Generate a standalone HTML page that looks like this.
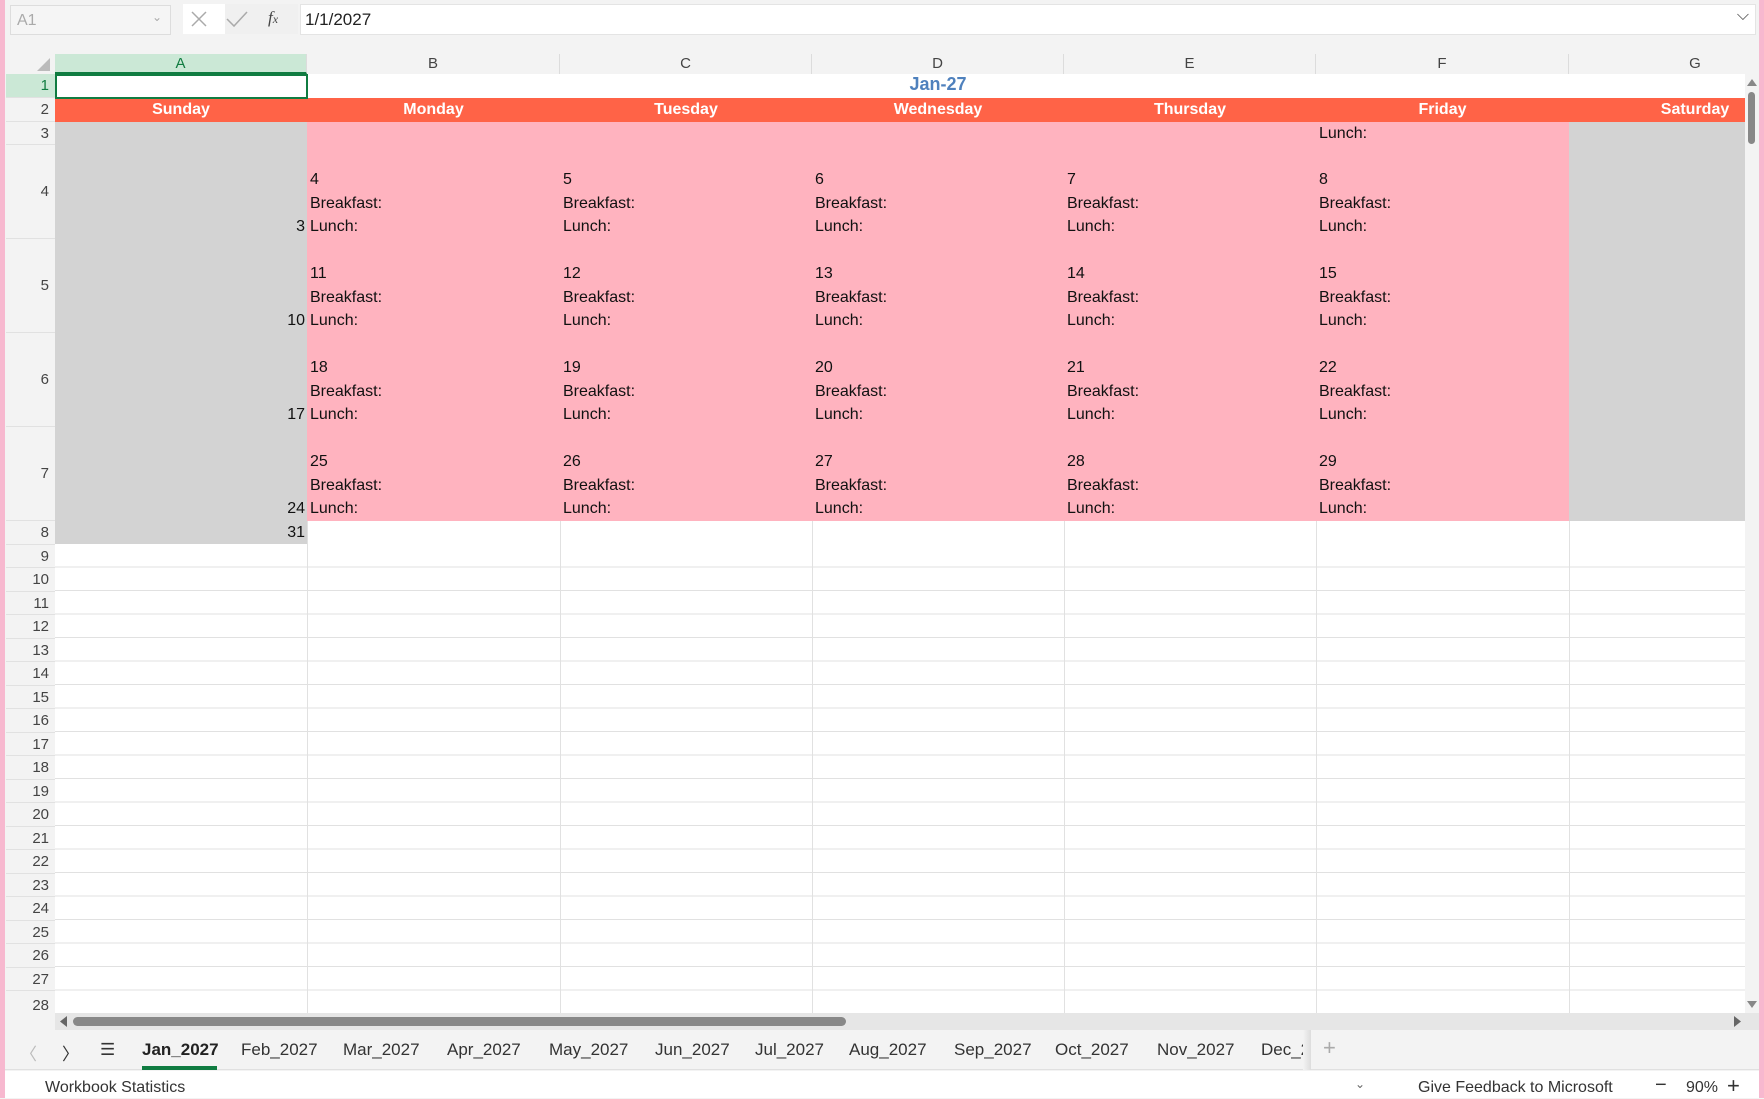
<!DOCTYPE html>
<html><head><meta charset="utf-8"><style>
*{box-sizing:border-box;margin:0;padding:0}
body{width:1764px;height:1098px;overflow:hidden;background:#f3f3f3;font-family:"Liberation Sans",sans-serif;position:relative;color:#222}
.a{position:absolute}
.vl{position:absolute;top:98px;width:1px;height:915px;background:#e1e1e1}
.rh{position:absolute;left:6px;width:49px;text-align:right;padding-right:6px;font-size:15px;color:#444;border-bottom:1px solid #e1e1e1;background:#f3f3f3}
.ch{position:absolute;top:54px;height:20px;text-align:center;font-size:15px;color:#444;line-height:20px;border-right:1px solid #dcdcdc}
.cell{position:absolute;font-size:16px;line-height:23.5px;padding-left:3px;color:#111}
.day{position:absolute;top:98px;height:24px;color:#fff;font-weight:bold;font-size:16px;line-height:24px;text-align:center}
.tab{position:absolute;top:1040px;font-size:17px;color:#333}
</style></head><body>
<div class="a" style="left:0;top:0;width:5px;height:1098px;background:#f7b8cf"></div>
<div class="a" style="right:0;top:0;width:5px;height:1098px;background:#f7b8cf"></div>
<div class="a" style="left:10px;top:5px;width:161px;height:30px;border:1px solid #ddd;background:#f5f5f5;font-size:16px;color:#aaa;padding:6px 6px">A1<span style="position:absolute;right:8px;top:4px;font-size:12px">⌄</span></div>
<div class="a" style="left:183px;top:4px;width:115px;height:30px;background:#fff"></div>
<div class="a" style="left:225px;top:4px;width:73px;height:30px;background:#f0f0f0"></div>
<svg class="a" style="left:190px;top:10px" width="18" height="18"><path d="M2 2L16 16M16 2L2 16" stroke="#aaa" stroke-width="1.5"/></svg>
<svg class="a" style="left:225px;top:10px" width="24" height="18"><path d="M2 9L9 16L22 2" stroke="#aaa" stroke-width="1.5" fill="none"/></svg>
<div class="a" style="left:268px;top:8px;font-size:17px;font-style:italic;font-family:'Liberation Serif',serif;color:#444">f<span style="font-size:12px">x</span></div>
<div class="a" style="left:300px;top:4px;width:1456px;height:31px;background:#fff;border:1px solid #e4e4e4;font-size:17px;padding:5px 4px;color:#222">1/1/2027<span style="position:absolute;right:6px;top:2px;font-size:16px;color:#444">⌵</span></div>

<div class="a" style="left:55px;top:74px;width:1690px;height:939px;background:#fff"></div>
<div class="vl" style="left:307px"></div><div class="vl" style="left:560px"></div><div class="vl" style="left:812px"></div><div class="vl" style="left:1064px"></div><div class="vl" style="left:1316px"></div><div class="vl" style="left:1569px"></div>
<div class="a" style="left:55px;top:544px;width:1690px;height:469px;background-image:repeating-linear-gradient(to bottom,transparent 0,transparent 22.5px,#e1e1e1 22.5px,#e1e1e1 23.5px)"></div>

<div class="a" style="left:55px;top:122px;width:252px;height:422px;background:#d3d3d3"></div>
<div class="a" style="left:307px;top:122px;width:1262px;height:399px;background:#ffb3bf"></div>
<div class="a" style="left:1569px;top:122px;width:176px;height:399px;background:#d3d3d3"></div>
<div class="a" style="left:55px;top:98px;width:1690px;height:24px;background:#ff6347"></div>
<div class="day" style="left:55px;width:252px">Sunday</div>
<div class="day" style="left:307px;width:253px">Monday</div>
<div class="day" style="left:560px;width:252px">Tuesday</div>
<div class="day" style="left:812px;width:252px">Wednesday</div>
<div class="day" style="left:1064px;width:252px">Thursday</div>
<div class="day" style="left:1316px;width:253px">Friday</div>
<div class="day" style="left:1569px;width:252px">Saturday</div>
<div class="a" style="left:812px;width:252px;top:72px;text-align:center;font-size:18px;font-weight:bold;color:#4f81bd;line-height:24px">Jan-27</div>
<div class="a" style="left:55px;top:74px;width:253px;height:25px;border:2px solid #107c41"></div>

<div class="cell" style="left:1316px;top:122px">Lunch:</div>

<div class="cell" style="left:307px;top:168px">4<br>Breakfast:<br>Lunch:</div>
<div class="cell" style="left:560px;top:168px">5<br>Breakfast:<br>Lunch:</div>
<div class="cell" style="left:812px;top:168px">6<br>Breakfast:<br>Lunch:</div>
<div class="cell" style="left:1064px;top:168px">7<br>Breakfast:<br>Lunch:</div>
<div class="cell" style="left:1316px;top:168px">8<br>Breakfast:<br>Lunch:</div>
<div class="cell" style="left:307px;top:262px">11<br>Breakfast:<br>Lunch:</div>
<div class="cell" style="left:560px;top:262px">12<br>Breakfast:<br>Lunch:</div>
<div class="cell" style="left:812px;top:262px">13<br>Breakfast:<br>Lunch:</div>
<div class="cell" style="left:1064px;top:262px">14<br>Breakfast:<br>Lunch:</div>
<div class="cell" style="left:1316px;top:262px">15<br>Breakfast:<br>Lunch:</div>
<div class="cell" style="left:307px;top:356px">18<br>Breakfast:<br>Lunch:</div>
<div class="cell" style="left:560px;top:356px">19<br>Breakfast:<br>Lunch:</div>
<div class="cell" style="left:812px;top:356px">20<br>Breakfast:<br>Lunch:</div>
<div class="cell" style="left:1064px;top:356px">21<br>Breakfast:<br>Lunch:</div>
<div class="cell" style="left:1316px;top:356px">22<br>Breakfast:<br>Lunch:</div>
<div class="cell" style="left:307px;top:450px">25<br>Breakfast:<br>Lunch:</div>
<div class="cell" style="left:560px;top:450px">26<br>Breakfast:<br>Lunch:</div>
<div class="cell" style="left:812px;top:450px">27<br>Breakfast:<br>Lunch:</div>
<div class="cell" style="left:1064px;top:450px">28<br>Breakfast:<br>Lunch:</div>
<div class="cell" style="left:1316px;top:450px">29<br>Breakfast:<br>Lunch:</div>
<div class="cell" style="left:200px;width:105px;text-align:right;top:215px">3</div>
<div class="cell" style="left:200px;width:105px;text-align:right;top:309px">10</div>
<div class="cell" style="left:200px;width:105px;text-align:right;top:403px">17</div>
<div class="cell" style="left:200px;width:105px;text-align:right;top:497px">24</div>
<div class="cell" style="left:200px;width:105px;text-align:right;top:521px">31</div>

<div class="a" style="left:6px;top:54px;width:49px;height:20px;background:#f3f3f3"></div>
<svg class="a" style="left:36px;top:57px" width="15" height="15"><path d="M14 1L14 14L1 14Z" fill="#bbb"/></svg>
<div class="ch" style="left:55px;width:252px;background:#cbe8d6;color:#107c41;border-bottom:2px solid #107c41">A</div>
<div class="ch" style="left:307px;width:253px">B</div>
<div class="ch" style="left:560px;width:252px">C</div>
<div class="ch" style="left:812px;width:252px">D</div>
<div class="ch" style="left:1064px;width:252px">E</div>
<div class="ch" style="left:1316px;width:253px">F</div>
<div class="ch" style="left:1569px;width:252px;border-right:none">G</div>

<div class="rh" style="top:74px;height:24px;line-height:24px;background:#cbe8d6;color:#107c41">1</div>
<div class="rh" style="top:98px;height:24px;line-height:24px">2</div>
<div class="rh" style="top:122px;height:23px;line-height:23px">3</div>
<div class="rh" style="top:145px;height:94px;line-height:94px">4</div>
<div class="rh" style="top:239px;height:94px;line-height:94px">5</div>
<div class="rh" style="top:333px;height:94px;line-height:94px">6</div>
<div class="rh" style="top:427px;height:94px;line-height:94px">7</div>
<div class="rh" style="top:521px;height:23.5px;line-height:23px">8</div>
<div class="rh" style="top:544.5px;height:23.5px;line-height:23px">9</div>
<div class="rh" style="top:568px;height:23.5px;line-height:23px">10</div>
<div class="rh" style="top:591.5px;height:23.5px;line-height:23px">11</div>
<div class="rh" style="top:615px;height:23.5px;line-height:23px">12</div>
<div class="rh" style="top:638.5px;height:23.5px;line-height:23px">13</div>
<div class="rh" style="top:662px;height:23.5px;line-height:23px">14</div>
<div class="rh" style="top:685.5px;height:23.5px;line-height:23px">15</div>
<div class="rh" style="top:709px;height:23.5px;line-height:23px">16</div>
<div class="rh" style="top:732.5px;height:23.5px;line-height:23px">17</div>
<div class="rh" style="top:756px;height:23.5px;line-height:23px">18</div>
<div class="rh" style="top:779.5px;height:23.5px;line-height:23px">19</div>
<div class="rh" style="top:803px;height:23.5px;line-height:23px">20</div>
<div class="rh" style="top:826.5px;height:23.5px;line-height:23px">21</div>
<div class="rh" style="top:850px;height:23.5px;line-height:23px">22</div>
<div class="rh" style="top:873.5px;height:23.5px;line-height:23px">23</div>
<div class="rh" style="top:897px;height:23.5px;line-height:23px">24</div>
<div class="rh" style="top:920.5px;height:23.5px;line-height:23px">25</div>
<div class="rh" style="top:944px;height:23.5px;line-height:23px">26</div>
<div class="rh" style="top:967.5px;height:23.5px;line-height:23px">27</div>
<div class="rh" style="top:991px;height:22px;line-height:30px;overflow:hidden;border:none">28</div>

<div class="a" style="left:1745px;top:74px;width:14px;height:939px;background:#f3f3f3"></div>
<svg class="a" style="left:1746px;top:77px" width="12" height="10"><path d="M1 9L6 2L11 9Z" fill="#888"/></svg>
<div class="a" style="left:1748px;top:92px;width:7px;height:52px;border-radius:4px;background:#888"></div>
<svg class="a" style="left:1746px;top:1000px" width="12" height="10"><path d="M1 1L6 8L11 1Z" fill="#888"/></svg>
<div class="a" style="left:55px;top:1013px;width:1704px;height:17px;background:#e6e6e6"></div>
<svg class="a" style="left:58px;top:1015px" width="10" height="13"><path d="M9 1L2 6.5L9 12Z" fill="#666"/></svg>
<div class="a" style="left:73px;top:1017px;width:773px;height:9px;border-radius:5px;background:#888"></div>
<svg class="a" style="left:1733px;top:1015px" width="10" height="13"><path d="M1 1L8 6.5L1 12Z" fill="#666"/></svg>

<div class="a" style="left:5px;top:1030px;width:1754px;height:40px;background:#f3f3f3;border-bottom:1px solid #e0e0e0"></div>
<div class="tab" style="left:20px;color:#bbb">〈</div>
<div class="tab" style="left:62px">〉</div>
<div class="tab" style="left:100px">☰</div>
<div class="tab" style="left:142px;font-weight:bold;color:#222">Jan_2027</div>
<div class="a" style="left:142px;top:1066px;width:75px;height:4px;background:#107c41"></div>
<div class="tab" style="left:241px">Feb_2027</div>
<div class="tab" style="left:343px">Mar_2027</div>
<div class="tab" style="left:447px">Apr_2027</div>
<div class="tab" style="left:549px">May_2027</div>
<div class="tab" style="left:655px">Jun_2027</div>
<div class="tab" style="left:755px">Jul_2027</div>
<div class="tab" style="left:849px">Aug_2027</div>
<div class="tab" style="left:954px">Sep_2027</div>
<div class="tab" style="left:1055px">Oct_2027</div>
<div class="tab" style="left:1157px">Nov_2027</div>
<div class="tab" style="left:1261px;width:47px;overflow:hidden;white-space:nowrap">Dec_2027</div>
<div class="a" style="left:1303px;top:1030px;width:8px;height:40px;background:linear-gradient(to right,#f3f3f3,#ddd)"></div>
<div class="tab" style="left:1323px;color:#aaa;font-size:22px;top:1035px">+</div>

<div class="a" style="left:5px;top:1071px;width:1754px;height:27px;background:#fff"></div>
<div class="a" style="left:45px;top:1079px;font-size:16px;color:#333">Workbook Statistics</div>
<div class="a" style="left:1355px;top:1077px;font-size:12px;color:#666">⌄</div>
<div class="a" style="left:1418px;top:1079px;font-size:16px;color:#333">Give Feedback to Microsoft</div>
<div class="a" style="left:1655px;top:1074px;font-size:20px;color:#333">−</div>
<div class="a" style="left:1686px;top:1079px;font-size:16px;color:#333">90%</div>
<div class="a" style="left:1727px;top:1073px;font-size:22px;color:#333">+</div>
</body></html>
